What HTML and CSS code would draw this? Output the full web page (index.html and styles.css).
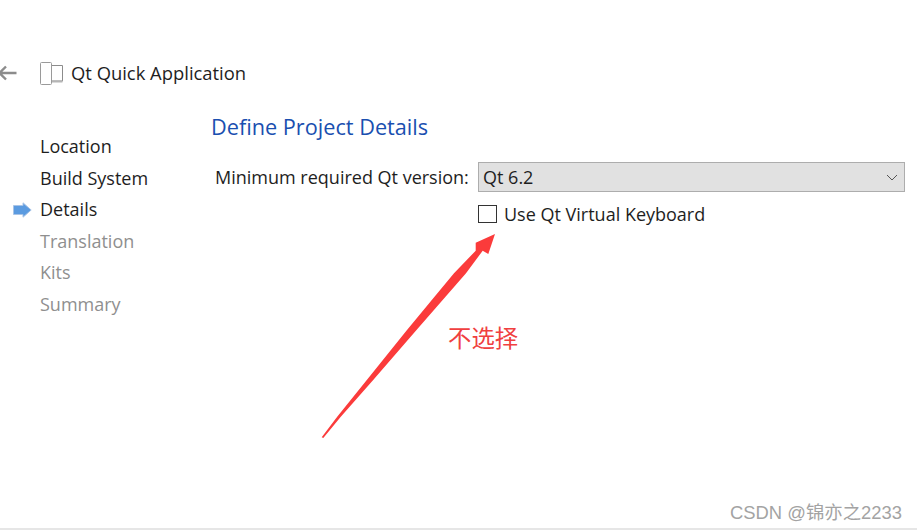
FILE: index.html
```html
<!DOCTYPE html>
<html lang="en">

<head>
    <meta charset="UTF-8">
    <meta name="viewport" content="width=device-width, initial-scale=1.0">
    <title>Qt Quick Application</title>
    <link rel="stylesheet" href="styles.css">
</head>

<body>
    <div id="page">
        <div class="wizard-header">
            <svg class="back-icon" width="18" height="16" viewBox="0 0 18 16">
                <path d="M7 1.5 L0.5 8 L7 14.5 M0.5 8 H17.5" fill="none" stroke="#8c8c8c" stroke-width="2.4" />
            </svg>
            <svg class="app-icon" width="24" height="23" viewBox="0 0 24 23">
                <path d="M11 3.5 H22.5 V19 H12" fill="#fff" stroke="#8c8c8c" stroke-width="1" />
                <path d="M12 19.5 H22.5" stroke="#b5b5b5" stroke-width="2" />
                <rect x="0.5" y="0.5" width="11" height="22" rx="1" fill="#fff" stroke="#9a9a9a" />
            </svg>
            <span class="wizard-title">Qt Quick Application</span>
        </div>

        <div class="wizard-body">
            <ul class="steps">
                <li class="step done">Location</li>
                <li class="step done">Build System</li>
                <li class="step current">
                    <svg class="step-arrow" width="19" height="16" viewBox="0 0 19 16">
                        <path d="M0.5 3.5 H10 V0.8 L18.2 8 L10 15.2 V12.5 H0.5 Z" fill="#5b9be0" stroke="#a9c4e6" stroke-width="1" />
                    </svg>
                    Details
                </li>
                <li class="step">Translation</li>
                <li class="step">Kits</li>
                <li class="step">Summary</li>
            </ul>

            <div class="details">
                <h1 class="details-title">Define Project Details</h1>
                <div class="form-row">
                    <span class="form-label">Minimum required Qt version:</span>
                    <div class="combo">
                        <span>Qt 6.2</span>
                        <svg width="12" height="7" viewBox="0 0 12 7">
                            <path d="M1 1 L6 6 L11 1" fill="none" stroke="#555" stroke-width="1" />
                        </svg>
                    </div>
                </div>
                <div class="check-row">
                    <span class="checkbox"></span>
                    <span>Use Qt Virtual Keyboard</span>
                </div>
            </div>
        </div>

        <!-- red note drawn over the screenshot -->
        <svg class="note-arrow" width="917" height="531" viewBox="0 0 917 531">
            <path d="M321.7 437.3 L337.2 416.7 L366.8 380 L407 330 L434.5 296.7 L454 273.3 L475.7 250.7 L475.7 242.7 L495 234 L488.3 254 L482.7 250.7 L466 273.3 L445.5 296.7 L416.5 330 L373.2 380 L340.8 416.7 L323.3 438 Z" fill="#fb3b3b" />
        </svg>
        <span class="note-text">不选择</span>
        <span class="watermark">CSDN @锦亦之2233</span>
    </div>
</body>

</html>
```

FILE: styles.css
```css
* {
    box-sizing: border-box;
}

html,
body {
    margin: 0;
    height: 100%;
    overflow: hidden;
    background: #fff;
}

body {
    font-family: "Open Sans", "Noto Sans CJK SC", sans-serif;
    color: #1e1e1e;
}

#page {
    position: relative;
    width: 917px;
    height: 530px;
    padding-top: 60px;
    border-bottom: 2px solid #e6e6e6;
}

.wizard-header {
    display: flex;
    align-items: center;
    height: 26px;
    font-size: 18.4px;
}

.wizard-title {
    margin-top: -2px;
}

.back-icon {
    margin-left: -1px;
    margin-right: 23px;
}

.app-icon {
    margin-right: 7px;
}

.wizard-body {
    display: flex;
    margin-top: 26px;
}

.steps {
    list-style: none;
    margin: 0;
    padding: 19px 0 0 40px;
    width: 211px;
    font-size: 18px;
}

.step {
    position: relative;
    height: 31.5px;
    line-height: 31.5px;
    color: #8f8f8f;
}

.step.done,
.step.current {
    color: #1e1e1e;
}

.step-arrow {
    position: absolute;
    left: -27px;
    top: 8px;
}

.details {
    flex: 1;
}

.details-title {
    margin: 0;
    font-size: 21.7px;
    font-weight: 400;
    line-height: 30px;
    color: #1a4fb0;
}

.form-row {
    display: flex;
    align-items: center;
    margin-top: 20px;
    padding-left: 4px;
    font-size: 18px;
}

.form-label {
    width: 263px;
}

.combo {
    display: flex;
    align-items: center;
    justify-content: space-between;
    width: 427px;
    height: 30px;
    padding: 0 6px 0 4px;
    background: #e1e1e1;
    border: 1px solid #adadad;
}

.check-row {
    display: flex;
    align-items: center;
    margin-top: 10px;
    padding-left: 267px;
    font-size: 18px;
    line-height: 24px;
    color: #1e1e1e;
}

.checkbox {
    width: 19px;
    height: 18px;
    margin-right: 7px;
    border: 1px solid #333;
    background: #fff;
}

.note-arrow {
    position: absolute;
    left: 0;
    top: 0;
}

.note-text {
    position: absolute;
    left: 448px;
    top: 324px;
    font-size: 23.4px;
    line-height: 28px;
    color: #f04040;
}

.watermark {
    position: absolute;
    left: 730px;
    top: 501px;
    font-family: "Liberation Sans", "Noto Sans CJK SC", sans-serif;
    font-size: 18.4px;
    line-height: 24px;
    color: #a3a3a3;
}
```
